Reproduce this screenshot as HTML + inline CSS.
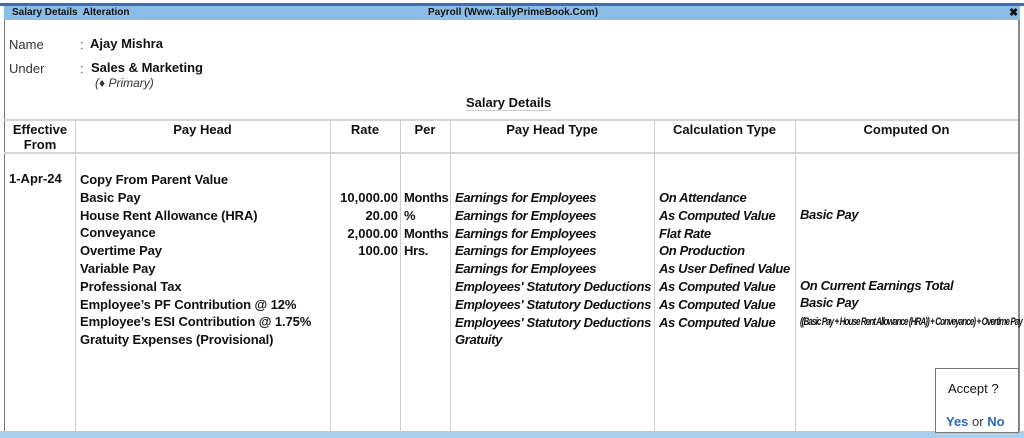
<!DOCTYPE html>
<html><head><meta charset="utf-8"><style>
*{margin:0;padding:0;box-sizing:border-box}
body{width:1024px;height:438px;background:#fff;position:relative;overflow:hidden;font-family:"Liberation Sans",Arial,sans-serif;color:#111}
.a{position:absolute;white-space:nowrap}
.b{font-weight:bold;font-size:13px}
.i{font-style:italic;font-weight:bold;font-size:13px;letter-spacing:-0.35px}
.v{position:absolute;top:120px;height:312px;width:1px;background:#cfcfcf}
.h{position:absolute;left:4px;width:1014px;height:2px;background:#d6d6d6}
</style></head><body>
<div class="a" style="left:0;top:3px;width:1024px;height:3px;background:#3d6fb6"></div>
<div class="a" style="left:4px;top:6px;width:1016px;height:14px;background:#8bbde6"></div>
<div class="a" style="left:12px;top:7px;font-size:10px;font-weight:bold">Salary Details&nbsp; Alteration</div>
<div class="a" style="left:428px;top:7px;font-size:10px;font-weight:bold">Payroll (Www.TallyPrimeBook.Com)</div>
<div class="a" style="left:1009px;top:6px;font-size:11px;font-weight:bold">✖</div>
<div class="a" style="left:4px;top:20px;width:1px;height:414px;background:#777"></div>
<div class="a" style="left:1018px;top:20px;width:2px;height:414px;background:#8a8a8a"></div>
<div class="a" style="left:0;top:431px;width:1024px;height:7px;background:#a9cfee"></div>

<div class="a" style="left:9px;top:37px;font-size:13px;color:#333">Name</div>
<div class="a" style="left:80px;top:37px;font-size:13px;color:#555">:</div>
<div class="a b" style="left:90px;top:36px">Ajay Mishra</div>
<div class="a" style="left:9px;top:61px;font-size:13px;color:#333">Under</div>
<div class="a" style="left:80px;top:61px;font-size:13px;color:#555">:</div>
<div class="a b" style="left:91px;top:60px">Sales &amp; Marketing</div>
<div class="a" style="left:95px;top:76px;font-size:12px;font-style:italic;color:#333">(♦ Primary)</div>
<div class="a b" style="left:466px;top:95px;border-bottom:1px solid #ccc">Salary Details</div>

<div class="h" style="top:119px"></div>
<div class="h" style="top:152px"></div>
<div class="v" style="left:75px"></div>
<div class="v" style="left:330px"></div>
<div class="v" style="left:400px"></div>
<div class="v" style="left:450px"></div>
<div class="v" style="left:654px"></div>
<div class="v" style="left:795px"></div>

<div class="a b" style="left:5px;width:70px;top:122px;text-align:center;line-height:15px">Effective<br>From</div>
<div class="a b" style="left:75px;width:255px;top:122px;text-align:center">Pay Head</div>
<div class="a b" style="left:330px;width:70px;top:122px;text-align:center">Rate</div>
<div class="a b" style="left:400px;width:50px;top:122px;text-align:center">Per</div>
<div class="a b" style="left:450px;width:204px;top:122px;text-align:center">Pay Head Type</div>
<div class="a b" style="left:654px;width:141px;top:122px;text-align:center">Calculation Type</div>
<div class="a b" style="left:795px;width:223px;top:122px;text-align:center">Computed On</div>

<div class="a b" style="left:9px;top:171px">1-Apr-24</div>
<div class="a b" style="left:80px;top:171px;line-height:17.8px;letter-spacing:-0.1px">Copy From Parent Value<br>Basic Pay<br>House Rent Allowance (HRA)<br>Conveyance<br>Overtime Pay<br>Variable Pay<br>Professional Tax<br>Employee’s PF Contribution @ 12%<br>Employee’s ESI Contribution @ 1.75%<br>Gratuity Expenses (Provisional)</div>
<div class="a b" style="left:330px;width:68px;top:189px;line-height:17.8px;text-align:right">10,000.00<br>20.00<br>2,000.00<br>100.00</div>
<div class="a b" style="left:404px;top:189px;line-height:17.8px;letter-spacing:-0.3px">Months<br>%<br>Months<br>Hrs.</div>
<div class="a i" style="left:455px;top:189px;line-height:17.8px">Earnings for Employees<br>Earnings for Employees<br>Earnings for Employees<br>Earnings for Employees<br>Earnings for Employees<br>Employees' Statutory Deductions<br>Employees' Statutory Deductions<br>Employees' Statutory Deductions<br>Gratuity</div>
<div class="a i" style="left:659px;top:189px;line-height:17.8px">On Attendance<br>As Computed Value<br>Flat Rate<br>On Production<br>As User Defined Value<br>As Computed Value<br>As Computed Value<br>As Computed Value</div>
<div class="a i" style="left:800px;top:207px">Basic Pay</div>
<div class="a i" style="left:800px;top:278px">On Current Earnings Total</div>
<div class="a i" style="left:800px;top:295px">Basic Pay</div>
<div class="a i" style="left:800px;top:315px;font-size:8px;letter-spacing:-0.9px;transform:scaleY(1.4);transform-origin:left top">((Basic Pay + House Rent Allowance (HRA)) + Conveyance) + Overtime Pay</div>

<div class="a" style="left:935px;top:368px;width:84px;height:65px;border:1px solid #777;background:#fff"></div>
<div class="a" style="left:948px;top:381px;font-size:13px">Accept ?</div>
<div class="a" style="left:946px;top:414px;font-size:13px;font-weight:bold;color:#2a6ab8">Yes <span style="color:#333;font-weight:normal">or</span> No</div>
</body></html>
